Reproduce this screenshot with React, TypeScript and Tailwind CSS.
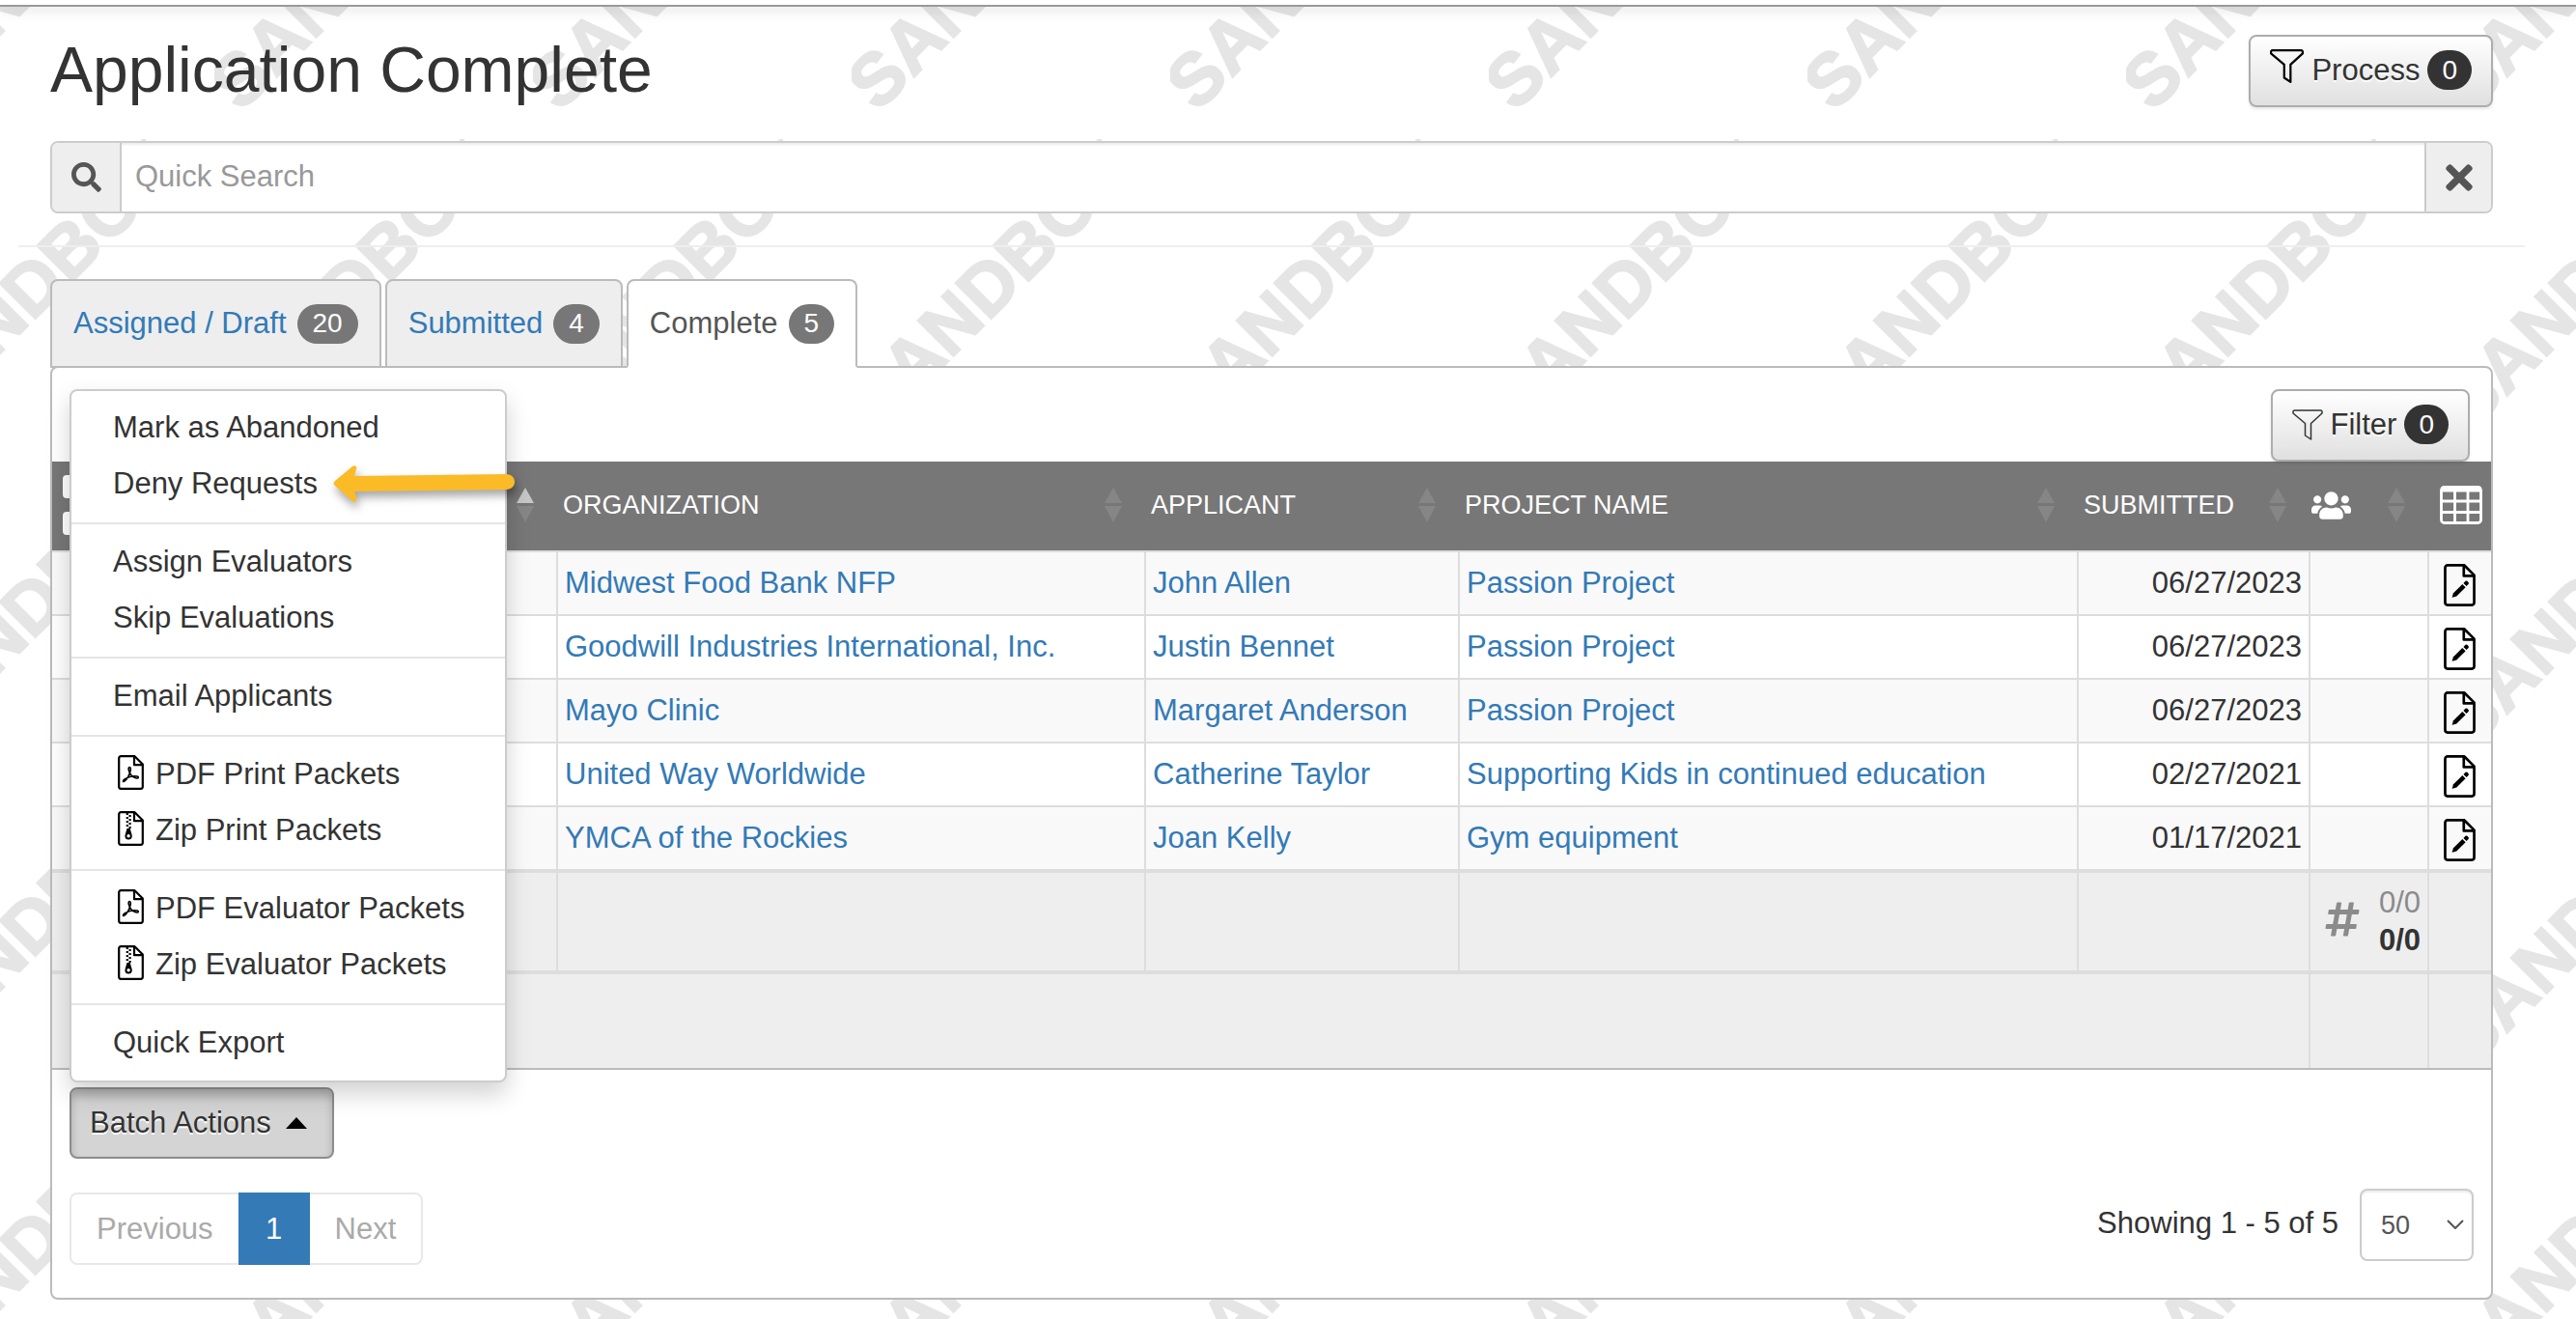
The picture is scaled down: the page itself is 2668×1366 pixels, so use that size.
import type { ReactNode } from "react";
import { FaHashtag, FaSearch, FaTimes, FaUsers } from "react-icons/fa";

interface Row {
  organization: string;
  applicant: string;
  project: string;
  submitted: string;
}

const rows: Row[] = [
  { organization: "Midwest Food Bank NFP", applicant: "John Allen", project: "Passion Project", submitted: "06/27/2023" },
  { organization: "Goodwill Industries International, Inc.", applicant: "Justin Bennet", project: "Passion Project", submitted: "06/27/2023" },
  { organization: "Mayo Clinic", applicant: "Margaret Anderson", project: "Passion Project", submitted: "06/27/2023" },
  { organization: "United Way Worldwide", applicant: "Catherine Taylor", project: "Supporting Kids in continued education", submitted: "02/27/2021" },
  { organization: "YMCA of the Rockies", applicant: "Joan Kelly", project: "Gym equipment", submitted: "01/17/2021" },
];

const tabs = [
  { label: "Assigned / Draft", count: 20, active: false },
  { label: "Submitted", count: 4, active: false },
  { label: "Complete", count: 5, active: true },
];

type MenuItem = { label: string; icon?: "pdf" | "zip"; arrow?: boolean };

const menuGroups: MenuItem[][] = [
  [{ label: "Mark as Abandoned" }, { label: "Deny Requests", arrow: true }],
  [{ label: "Assign Evaluators" }, { label: "Skip Evaluations" }],
  [{ label: "Email Applicants" }],
  [
    { label: "PDF Print Packets", icon: "pdf" },
    { label: "Zip Print Packets", icon: "zip" },
  ],
  [
    { label: "PDF Evaluator Packets", icon: "pdf" },
    { label: "Zip Evaluator Packets", icon: "zip" },
  ],
  [{ label: "Quick Export" }],
];

const Watermark = () => (
  <svg aria-hidden="true" className="absolute inset-0 -z-10 h-full w-full">
    <defs>
      <pattern id="sandbox" x="-108" y="144" width="330" height="330" patternUnits="userSpaceOnUse">
        <text
          x="142"
          y="149"
          dy="28"
          textAnchor="middle"
          transform="rotate(-45 142 149)"
          fontFamily="Liberation Sans, Arial, sans-serif"
          fontWeight="700"
          fontSize="76"
          fill="#e5e5e5"
          stroke="#e5e5e5"
          strokeWidth="2"
        >
          SANDBOX
        </text>
      </pattern>
    </defs>
    <rect width="100%" height="100%" fill="url(#sandbox)" />
  </svg>
);

const FunnelIcon = ({ className }: { className: string }) => (
  <svg viewBox="0 0 32 32" fill="none" stroke="currentColor" strokeLinejoin="round" className={className}>
    <path d="M2 1h28l1 1v2L19.5 14.5V31l-6-4V14.5L1 4V2z" />
  </svg>
);

const FileOutline = ({ children, className }: { children: ReactNode; className: string }) => (
  <svg viewBox="0 0 27 36" fill="none" stroke="#000" strokeWidth="2.2" strokeLinejoin="round" className={className}>
    <path d="M3 1.2h14.5l8.3 8.3v23.3a2 2 0 0 1-2 2H3.2a2 2 0 0 1-2-2V3.2a2 2 0 0 1 2-2z" />
    <path d="M17 1.2v9h9" />
    {children}
  </svg>
);

const PdfIcon = () => (
  <FileOutline className="ml-[5px] h-9 w-[27px]">
    <path
      strokeWidth="1.6"
      d="M12.2 12.5c-1.6 0-1.2 3 0 5.500 1.500 3 4.300 5.500 7.300 6 2 .3 2.500-1.600.5-2-4-.8-9.500.8-12.500 2.600-2.500 1.500-2.500 3.500-1 2.800C9.500 26 12.300 20 13.100 16c.4-1.800.2-3.500-.9-3.500z"
    />
  </FileOutline>
);

const ZipIcon = () => (
  <FileOutline className="ml-[5px] h-9 w-[27px]">
    <path strokeDasharray="2 2" d="M9.800 2v16M12.600 4v14" />
    <path d="M9.500 18h3.200l2 7a3.700 3.700 0 1 1-7.200 0z" fill="#000" stroke="none" />
    <circle cx="11.1" cy="25.7" r="1.7" fill="#fff" stroke="none" />
  </FileOutline>
);

const EditFileIcon = () => (
  <FileOutline className="h-11 w-[33px]">
    <path d="M7 28.500l1.200-3.800 7.600-7.500 2.700 2.700-7.600 7.500z" fill="#000" stroke="none" />
    <path d="M16.700 16.300l1.700-1.700q.8-.6 1.500 0l1 1q.7.800 0 1.500l-1.600 1.700z" fill="#000" stroke="none" />
  </FileOutline>
);

const GridIcon = () => (
  <svg viewBox="0 0 44 40" fill="none" stroke="currentColor" strokeWidth="2.8" className="h-10 w-11">
    <rect x="1.5" y="1.5" width="41" height="37" rx="3" />
    <path d="M1 4h42" strokeWidth="5" />
    <path d="M1 16h42M1 27.500h42M15.500 5v34M29 5v34" />
  </svg>
);

const SortIcon = ({ ascending }: { ascending?: boolean }) => (
  <svg viewBox="0 0 18 36" className="h-9 w-[18px] shrink-0">
    <path d="M9 0l9 16H0z" fill={ascending ? "#c6c6c6" : "#868686"} />
    <path d="M0 19h18L9 36z" fill="#868686" />
  </svg>
);

const Badge = ({ children, dark }: { children: ReactNode; dark?: boolean }) => (
  <span
    className={`inline-flex h-[41px] items-center rounded-full text-[28px] text-white [text-shadow:none] ${
      dark ? "bg-[#333] px-[15px]" : "bg-[#777] px-4"
    }`}
  >
    {children}
  </span>
);

const FilterButton = ({ label, icon, className }: { label: string; icon: ReactNode; className: string }) => (
  <button
    type="button"
    className={`flex h-[75px] items-center rounded-lg border-2 border-[#adadad] bg-gradient-to-b from-white to-[#e0e0e0] px-5 pb-[2px] shadow-[0_2px_3px_rgba(0,0,0,0.1)] [text-shadow:0_2px_0_#fff] ${className}`}
  >
    {icon}
    {label}
    <Badge dark>0</Badge>
  </button>
);

const HeaderCell = ({ children, ascending }: { children?: ReactNode; ascending?: boolean }) => (
  <th className="h-[92px] p-0 pr-[23px] pb-[2px] pl-[7px] font-normal">
    <div className="flex items-center justify-between">
      {children}
      <SortIcon ascending={ascending} />
    </div>
  </th>
);

const ActionsMenu = () => (
  <div className="absolute bottom-full left-0 z-10 mb-[5px] w-[453px] rounded-lg border-2 border-[#ccc] bg-white pt-[10px] pb-[9px] shadow-[0_12px_24px_rgba(0,0,0,0.18)]">
    {menuGroups.map((group, index) => (
      <ul
        key={index}
        className={index > 0 ? "mt-[10px] border-t-2 border-[#e5e5e5] pt-[11px]" : ""}
      >
        {group.map((item) => (
          <li key={item.label} className="relative">
            <a href="#" className="flex h-[58px] items-center pb-[2px] pl-[43px]">
              {item.icon && (
                <span className="w-11 pb-1">{item.icon === "pdf" ? <PdfIcon /> : <ZipIcon />}</span>
              )}
              {item.label}
            </a>
            {item.arrow && (
              <svg
                viewBox="0 0 188 40"
                className="absolute top-2 left-[271px] h-10 w-[188px] drop-shadow-[2px_6px_5px_rgba(0,0,0,0.35)]"
              >
                <path
                  d="M2 17L20 2c3-2 5 0 4 3l-2 7 157-2c12 0 12 16 0 16l-157 2 2 6c1 4-1 6-4 4L2 22c-2-2-2-3 0-5z"
                  fill="#fbbb27"
                />
              </svg>
            )}
          </li>
        ))}
      </ul>
    ))}
  </div>
);

const cell = "h-[66px] border-t-2 border-l-2 border-[#ddd] px-[7px] py-0";
const footCell = "h-[105px] border-t-4 border-l-2 border-[#ddd] p-0";

const ApplicationsTable = () => (
  <table className="w-full table-fixed border-separate border-spacing-0 border-b-2 border-[#bbb]">
    <colgroup>
      <col className="w-[522px]" />
      <col className="w-[609px]" />
      <col className="w-[325px]" />
      <col className="w-[641px]" />
      <col className="w-[240px]" />
      <col className="w-[123px]" />
      <col className="w-[66px]" />
    </colgroup>
    <thead className="bg-[#777] text-left text-[27px] text-white uppercase">
      <tr>
        <HeaderCell ascending>
          <div className="flex flex-col gap-[14px] pl-1">
            <input
              type="checkbox"
              aria-label="Select all on page"
              className="size-6 appearance-none rounded-sm bg-white"
            />
            <input
              type="checkbox"
              aria-label="Select all"
              className="size-6 appearance-none rounded-sm bg-white"
            />
          </div>
        </HeaderCell>
        <HeaderCell>Organization</HeaderCell>
        <HeaderCell>Applicant</HeaderCell>
        <HeaderCell>Project Name</HeaderCell>
        <HeaderCell>Submitted</HeaderCell>
        <HeaderCell>
          <FaUsers className="-ml-1 h-[33px] w-[41px]" />
        </HeaderCell>
        <th className="p-0 pb-[2px] pl-[13px]">
          <button type="button" aria-label="Columns" className="block">
            <GridIcon />
          </button>
        </th>
      </tr>
    </thead>
    <tbody>
      {rows.map((row) => (
        <tr key={row.organization} className="odd:bg-[#f9f9f9] even:bg-white">
          <td className="h-[66px] border-t-2 border-[#ddd] p-0" />
          <td className={cell}>
            <a href="#" className="text-[#337ab7]">{row.organization}</a>
          </td>
          <td className={cell}>
            <a href="#" className="text-[#337ab7]">{row.applicant}</a>
          </td>
          <td className={cell}>
            <a href="#" className="text-[#337ab7]">{row.project}</a>
          </td>
          <td className={`${cell} text-right`}>{row.submitted}</td>
          <td className={cell} />
          <td className="h-[66px] border-t-2 border-l-2 border-[#ddd] p-0 pt-[3px] pl-[15px]">
            <a href="#" aria-label="Open" className="block">
              <EditFileIcon />
            </a>
          </td>
        </tr>
      ))}
    </tbody>
    <tfoot className="bg-[#eee]">
      <tr>
        <td className="h-[105px] border-t-4 border-[#ddd] p-0" />
        <td className={footCell} />
        <td className={footCell} />
        <td className={footCell} />
        <td className={footCell} />
        <td className={footCell}>
          <div className="flex items-center justify-between pr-[7px] pb-[2px] pl-[13px] leading-[39px]">
            <FaHashtag className="mb-1 size-10 text-[#8b8b8b]" />
            <div>
              <div className="text-[#8b8b8b]">0/0</div>
              <div className="font-bold">0/0</div>
            </div>
          </div>
        </td>
        <td className={footCell} />
      </tr>
      <tr>
        <td colSpan={5} className="h-[101px] border-t-4 border-[#ddd] p-0" />
        <td className="border-t-4 border-l-2 border-[#ddd] p-0" />
        <td className="border-t-4 border-l-2 border-[#ddd] p-0" />
      </tr>
    </tfoot>
  </table>
);

const App = () => (
  <div className="relative isolate min-h-screen bg-white font-['Liberation_Sans',Arial,sans-serif] text-[31px] leading-[44px] text-[#333]">
    <Watermark />
    <div className="h-[7px] border-b-2 border-[#999] bg-white shadow-[0_2px_16px_rgba(0,0,0,0.15)]" />

    <div className="mr-[53px] ml-[19px]">
      <header className="flex items-start justify-between px-[33px] pt-[29px]">
        <h1 className="text-[66px] leading-[72px]">Application Complete</h1>
        <FilterButton
          label="Process"
          className="gap-2"
          icon={<FunnelIcon className="mb-2 size-[35px] stroke-2 text-black" />}
        />
      </header>

      <div className="px-[33px] pt-[35px]">
        <div className="flex h-[75px] overflow-hidden rounded-lg border-2 border-[#ccc] bg-white">
          <label htmlFor="quick-search" className="flex w-[72px] items-center justify-center border-r-2 border-[#ccc] bg-[#eee]">
            <FaSearch className="size-[31px] text-[#555]" />
          </label>
          <input
            id="quick-search"
            type="text"
            placeholder="Quick Search"
            className="min-w-0 flex-1 px-[14px] pb-[2px] shadow-[inset_0_2px_2px_rgba(0,0,0,0.08)] outline-none placeholder:text-[#999]"
          />
          <button type="button" aria-label="Clear" className="flex w-[69px] items-center justify-center border-l-2 border-[#ccc] bg-[#eee]">
            <FaTimes className="size-10 text-[#555]" />
          </button>
        </div>
      </div>

      <hr className="mt-[33px] mb-[33px] border-t-2 border-[#eee]" />

      <main className="px-[33px]">
        <nav className="relative -mb-[2px] flex gap-1">
          {tabs.map((tab) => (
            <a
              key={tab.label}
              href="#"
              className={`flex h-[92px] items-center gap-[11px] rounded-t-lg border-2 border-[#bbb] px-[22px] ${
                tab.active ? "border-b-white bg-white text-[#555]" : "bg-[#eee] text-[#337ab7]"
              }`}
            >
              {tab.label}
              <Badge>{tab.count}</Badge>
            </a>
          ))}
        </nav>

        <section className="rounded-lg border-2 border-[#bbb] bg-white pb-[34px]">
          <div className="flex justify-end pt-[22px] pr-[22px]">
            <FilterButton
              label="Filter"
              className="gap-2"
              icon={<FunnelIcon className="size-8 stroke-[1.5]" />}
            />
          </div>

          <ApplicationsTable />

          <div className="relative mt-[18px] ml-[18px] w-fit">
            <button
              type="button"
              aria-expanded="true"
              className="flex h-[74px] items-center gap-[15px] rounded-lg border-2 border-[#8c8c8c] bg-[#d4d4d4] pr-[26px] pl-[19px] shadow-[inset_0_6px_10px_rgba(0,0,0,0.2)] [text-shadow:0_2px_0_#fff]"
            >
              Batch Actions
              <svg viewBox="0 0 22 12" className="h-3 w-[22px]">
                <path d="M11 0L22 12H0z" fill="#000" />
              </svg>
            </button>
            <ActionsMenu />
          </div>

          <footer className="mt-[31px] flex items-start justify-between pr-[18px] pl-[18px]">
            <div className="mt-1 flex h-[75px] rounded-lg border-2 border-[#e8e8e8] text-[#aaa]">
              <button type="button" className="px-[26px]">Previous</button>
              <button type="button" className="-my-[2px] w-[74px] bg-[#337ab7] text-white">1</button>
              <button type="button" className="px-[26px]">Next</button>
            </div>
            <div className="flex items-center gap-[22px]">
              <label htmlFor="page-size" className="pb-[3px]">Showing 1 - 5 of 5</label>
              <div className="relative">
                <select
                  id="page-size"
                  className="h-[75px] w-[118px] appearance-none rounded-lg border-2 border-[#ccc] bg-white pl-5 text-[27px] text-[#555] shadow-[inset_0_2px_2px_rgba(0,0,0,0.08)]"
                >
                  <option>50</option>
                </select>
                <svg viewBox="0 0 18 10" fill="none" stroke="#555" strokeWidth="2" className="pointer-events-none absolute top-8 right-[10px] h-[10px] w-[18px]">
                  <path d="M1 1l8 8 8-8" />
                </svg>
              </div>
            </div>
          </footer>
        </section>
      </main>
    </div>
  </div>
);

export default App;
